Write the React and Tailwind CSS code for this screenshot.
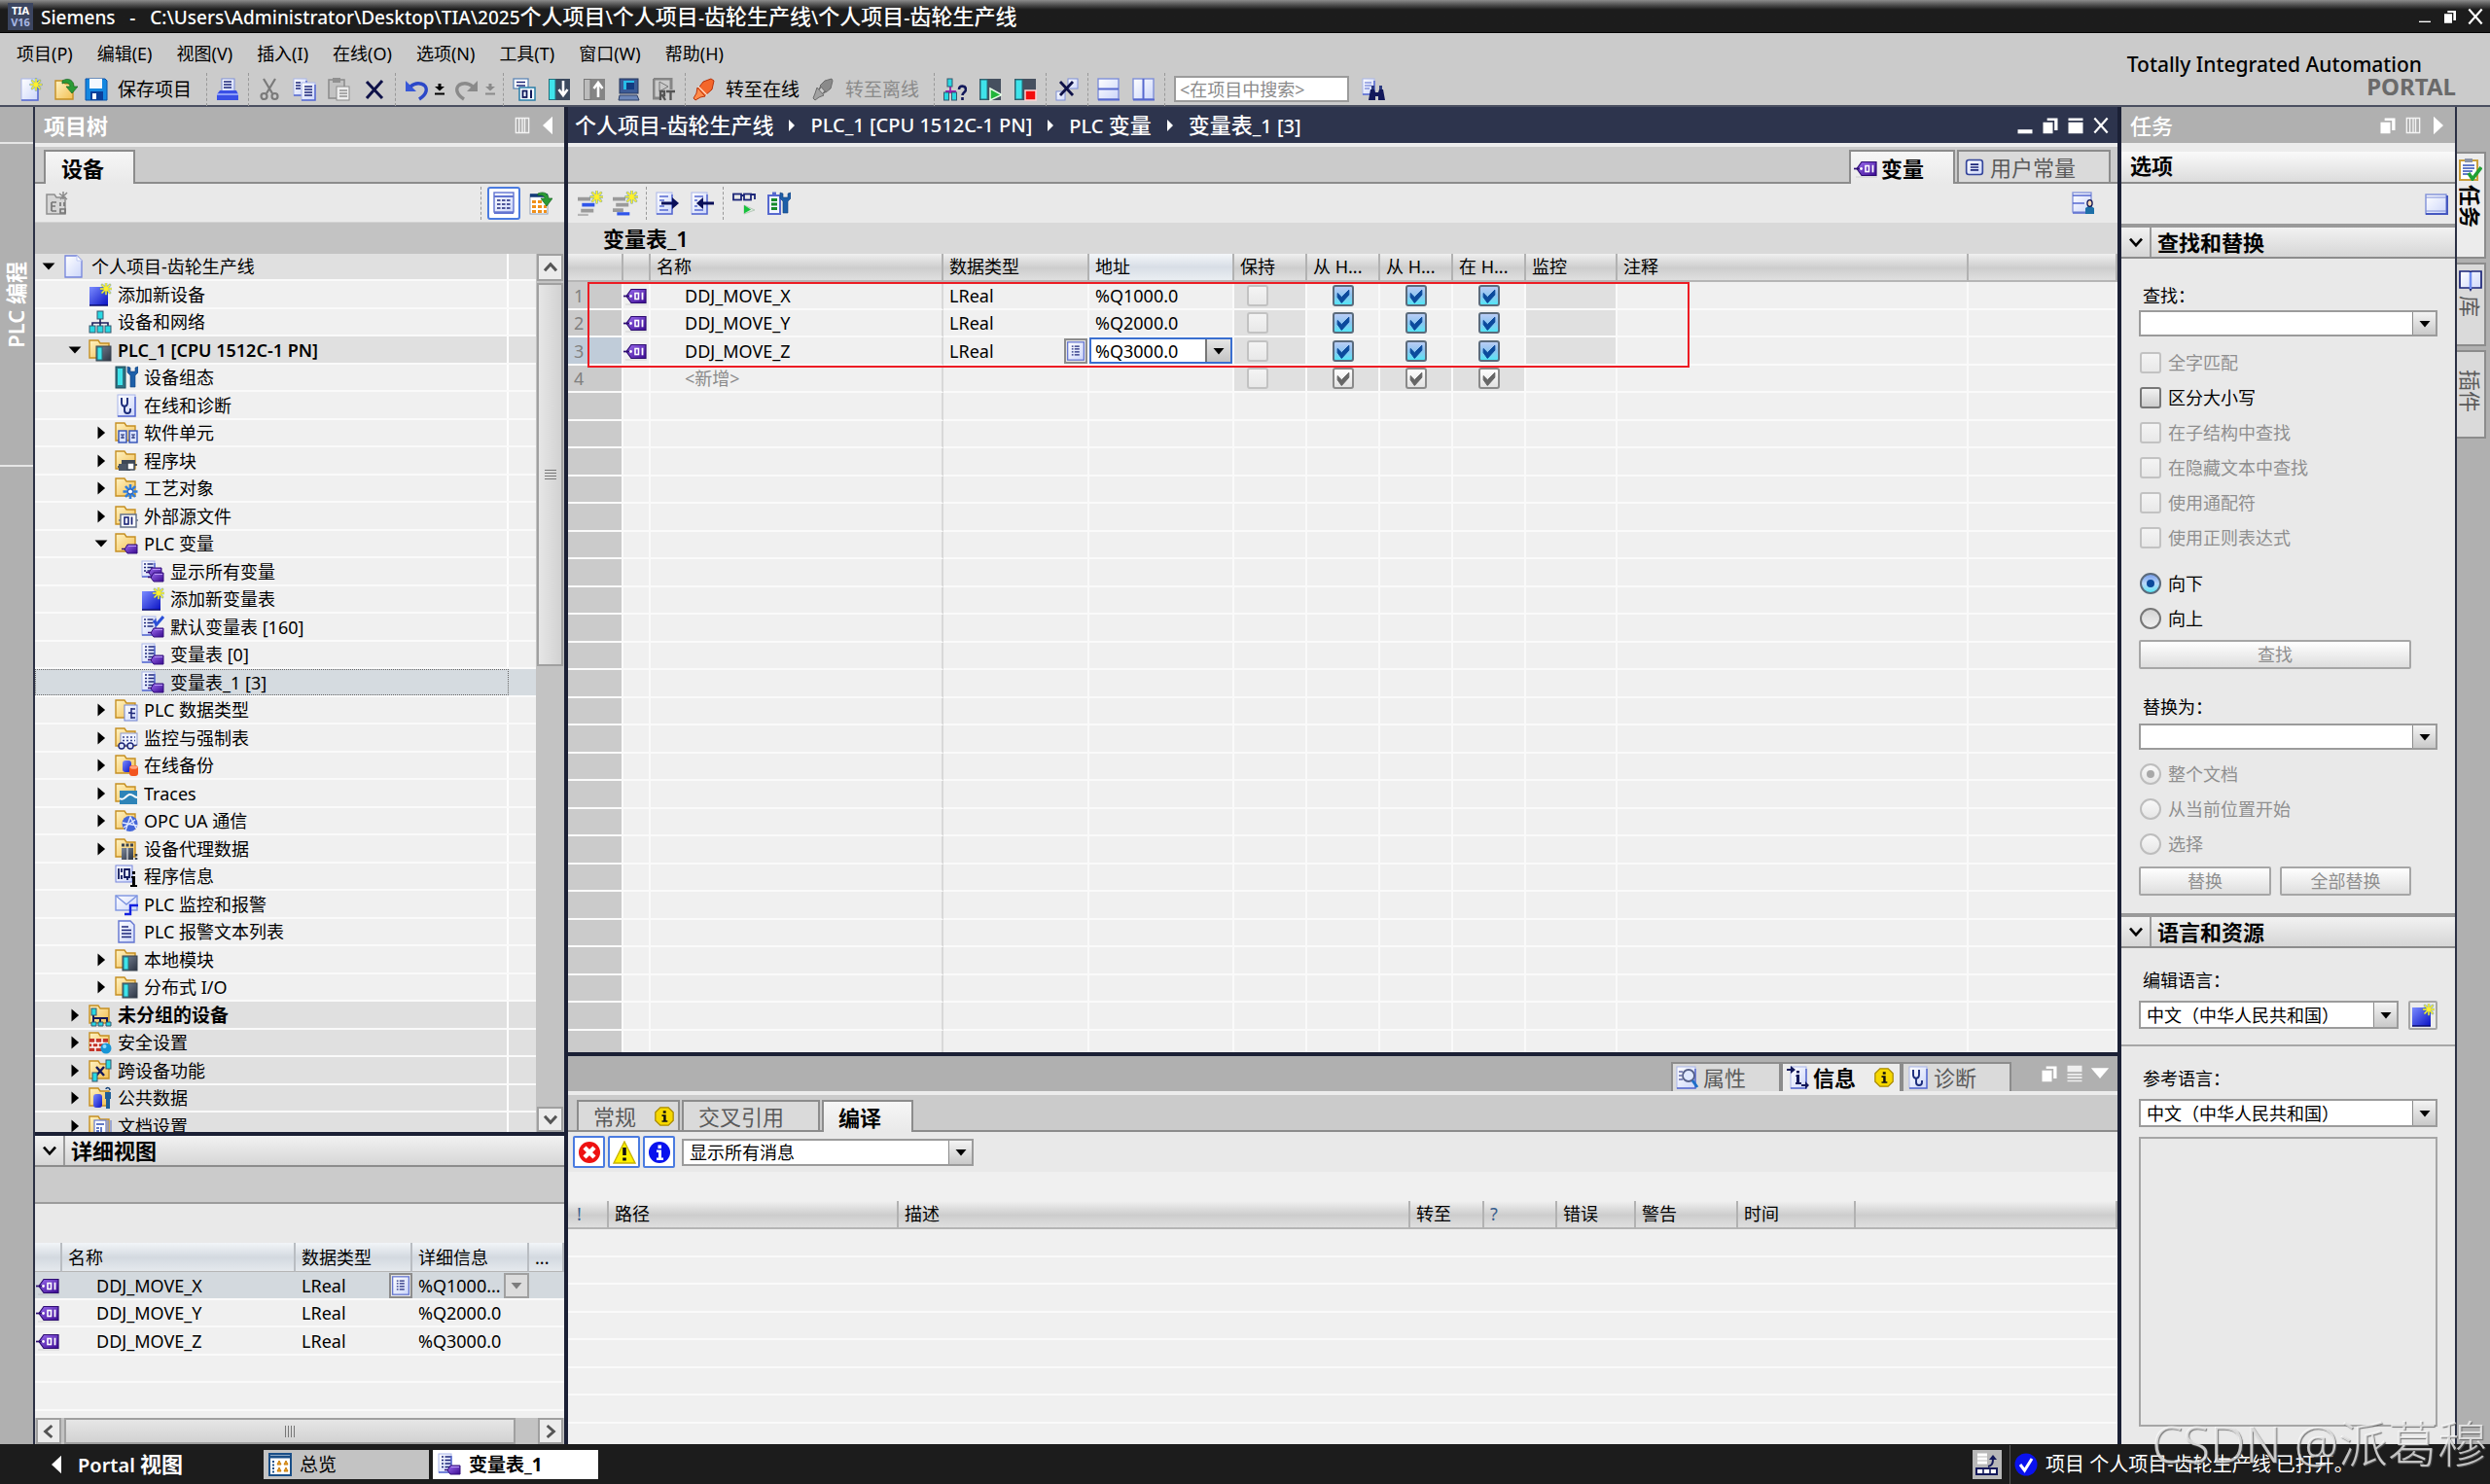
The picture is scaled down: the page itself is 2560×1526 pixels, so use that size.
import React from "react";

/* ---------- drawing primitives ---------- */
const Ic = ({ children, c = "w-6 h-6" }) => (
  <svg className={c + " shrink-0 block"} viewBox="0 0 24 24" fill="none" aria-hidden="true">
    {children}
  </svg>
);
const Defs = () => (
  <svg className="block h-0 w-0" aria-hidden="true">
    <defs>
      <linearGradient id="fold" x1="0" y1="0" x2="1" y2="1"><stop offset="0" stopColor="#fff3c4" /><stop offset="1" stopColor="#f2bf52" /></linearGradient>
      <linearGradient id="page" x1="0" y1="0" x2="1" y2="1"><stop offset="0" stopColor="#ffffff" /><stop offset="1" stopColor="#ccd6fa" /></linearGradient>
      <linearGradient id="blu" x1="0" y1="0" x2="1" y2="1"><stop offset="0" stopColor="#7b8cff" /><stop offset="1" stopColor="#0a12c4" /></linearGradient>
      <linearGradient id="pur" x1="0" y1="0" x2="1" y2="1"><stop offset="0" stopColor="#9c6cf0" /><stop offset="1" stopColor="#3a0a90" /></linearGradient>
      <linearGradient id="slate" x1="0" y1="0" x2="1" y2="1"><stop offset="0" stopColor="#7c8799" /><stop offset="1" stopColor="#2c3442" /></linearGradient>
    </defs>
  </svg>
);
/* Han characters are set in a larger size than the Latin text around them. */
const Mix = ({ children }) =>
  children.split(/([\u4e00-\u9fff]+)/).map((p, i) => (i % 2 ? <span key={i} className="text-[22px]">{p}</span> : p));
const Spark = ({ x, y }) => (
  <g transform={`translate(${x} ${y})`} strokeLinecap="round">
    <path d="M0-5.5V5.5M-5.5 0H5.5M-4-4L4 4M4-4L-4 4" stroke="#3a7f9a" strokeWidth="2.6" opacity=".6" />
    <path d="M0-5.5V5.5M-5.5 0H5.5M-4-4L4 4M4-4L-4 4" stroke="#fff12a" strokeWidth="1.5" />
  </g>
);
const Page = ({ x = 2, y = 1, w = 17, h = 22 }) => (
  <>
    <rect x={x} y={y} width={w} height={h} fill="url(#page)" stroke="#a9b6ea" />
    <path d={`M${x} ${y + h}h${w}V${y + 2}`} stroke="#5668cf" strokeWidth="1.5" />
  </>
);
const Folder = ({ children }) => (
  <Ic>
    <path d="M1 2h9l2 3h9v15H1z" fill="url(#fold)" stroke="#c58f22" strokeWidth="1.4" />
    {children}
  </Ic>
);
const Tag = ({ x = 9, y = 12 }) => (
  <g transform={`translate(${x} ${y})`}>
    <path d="M4 1h10v9H4L1 6z" fill="url(#pur)" stroke="#35107c" strokeWidth="1" />
    <path d="M-2 5.5h4" stroke="#35107c" strokeWidth="1.5" />
    <path d="M5 2.5h8" stroke="#b99af5" />
  </g>
);
const TagIcon = ({ c }) => (
  <Ic c={c}>
    <path d="M8 5.500h15v14H8L3 12.500z" fill="url(#pur)" stroke="#2d0c72" strokeWidth="1.2" />
    <path d="M0 12.500h8" stroke="#2d0c72" strokeWidth="1.7" />
    <circle cx="7.500" cy="12.500" r="1.4" fill="#fff" />
    <rect x="12" y="9.500" width="3.500" height="6" stroke="#fff" strokeWidth="1.6" />
    <path d="M19.500 8.700v7.600" stroke="#fff" strokeWidth="1.8" />
    <path d="M2 21h22" stroke="#000" opacity=".12" />
  </Ic>
);
const Module = ({ x = 8, y = 8 }) => (
  <>
    <rect x={x} y={y} width="15" height="15" fill="url(#slate)" stroke="#39424f" />
    <rect x={x + 1} y={y + 1} width="5" height="13" fill="#3fe3ea" stroke="#23707d" />
  </>
);
const Wrench = ({ x = 13, y = 1 }) => (
  <path transform={`translate(${x} ${y})`} d="M0 0v6l3 3v12h5V9l3-3V0L8 1v4H3V1z" fill="#1d5fa8" stroke="#123f78" strokeWidth=".6" />
);
const Nodes = () => (
  <>
    <path d="M12 8v5M4 17v-4h16v4M12 13v4" stroke="#1a1f5c" strokeWidth="1.6" />
    <rect x="9" y="1" width="6" height="8" fill="#27d8e2" stroke="#37566d" />
    <rect x="1" y="16" width="6" height="7" fill="#27d8e2" stroke="#37566d" />
    <rect x="9" y="16" width="6" height="7" fill="#27d8e2" stroke="#37566d" />
    <rect x="17" y="16" width="6" height="7" fill="#27d8e2" stroke="#37566d" />
  </>
);
const ListLines = ({ x = 5, y = 6, n = 4, c = "#1c2678" }) => (
  <g stroke={c} strokeWidth="1.5">
    {Array.from({ length: n }, (_, i) => (
      <path key={i} d={`M${x} ${y + i * 3.5}h2M${x + 3.5} ${y + i * 3.5}h6`} />
    ))}
  </g>
);
const Steth = () => (
  <path d="M7 4v5c0 5 6 5 6 0V4M10 13v4c0 4 6 4 6 0M16 15v2" stroke="#1a2b7a" strokeWidth="1.9" />
);

const icons = {
  page: <Ic><path d="M3 1h12l5 5v17H3z" fill="url(#page)" stroke="#7484dc" strokeWidth="1.3" /><path d="M15 1v5h5" fill="#fff" stroke="#c0cbf5" /></Ic>,
  addNew: <Ic><rect x="1" y="4" width="19" height="19" fill="url(#blu)" /><path d="M1 23h19" stroke="#080b70" strokeWidth="1.5" /><Spark x={18} y={6} /></Ic>,
  network: <Ic><Nodes /></Ic>,
  plc: <Folder><Module /></Folder>,
  config: <Ic><rect x="1" y="1" width="10" height="22" fill="#2d7383" stroke="#1f4d5c" /><rect x="3" y="3" width="5" height="17" fill="#3fe3ea" /><Wrench /></Ic>,
  diag: <Ic><Page x={3} w={18} /><Steth /></Ic>,
  units: <Folder><g stroke="#2f4fb5" strokeWidth="1.4" fill="#dbe4ff"><rect x="4" y="10" width="8" height="12" /><rect x="15" y="10" width="8" height="12" /></g><path d="M6 14h4M6 17h4M17 14h4M17 17h4M8 14v4M19 14v4" stroke="#1b2a70" /></Folder>,
  blocks: <Folder><path d="M3 18h5M18 16h5" stroke="#232b38" strokeWidth="1.5" /><rect x="7" y="11" width="14" height="5" fill="#3e4856" /><rect x="4" y="15" width="12" height="7" fill="#4b5666" /><rect x="13" y="14" width="7" height="7" fill="#fff" stroke="#3e4856" strokeWidth="1.5" /></Folder>,
  tech: <Folder><path d="M16 8v15M8.5 15.5h15M11 10l10 11M21 10L11 21" stroke="#2e7de0" strokeWidth="2.6" /><circle cx="16" cy="15.5" r="2.5" fill="#fff" stroke="#1b4fae" /></Folder>,
  ext: <Folder><rect x="6" y="10" width="16" height="13" fill="#fff" stroke="#64718a" strokeWidth="1.5" /><rect x="10" y="13" width="4" height="7" stroke="#1c2678" strokeWidth="1.6" /><path d="M17.5 12.5v8" stroke="#1c2678" strokeWidth="1.8" /><path d="M4 16h2M22 16h2" stroke="#64718a" strokeWidth="1.5" /></Folder>,
  vars: <Folder><Tag /></Folder>,
  allVars: <Ic><Page x={1} w={13} h={16} /><ListLines x={3} y={4} n={3} /><Tag x={7} y={7} /><Tag x={9} y={12} /></Ic>,
  defTable: <Ic><Page x={1} w={14} h={19} /><ListLines x={3} y={4} n={3} /><path d="M13 5l3 4 7-8" stroke="#2b50d8" strokeWidth="3" /><Tag /></Ic>,
  table: <Ic><Page x={1} w={13} h={19} /><ListLines x={4} y={4} n={4} /><Tag /></Ic>,
  types: <Folder><rect x="10" y="7" width="13" height="16" fill="url(#page)" stroke="#6f82cf" /><path d="M14 15h3M17 10v11M17 11h4M17 15.5h4M17 20h4" stroke="#1c2678" strokeWidth="1.5" /></Folder>,
  watch: <Folder><rect x="6" y="7" width="17" height="12" fill="#eef1ff" stroke="#8d99c9" /><path d="M8 11h13M8 14.5h13" stroke="#37458f" strokeWidth="1.5" strokeDasharray="2 2" /><circle cx="7" cy="20" r="3" fill="#dfe6ff" stroke="#1c2678" strokeWidth="1.4" /><circle cx="16" cy="20" r="3" fill="#dfe6ff" stroke="#1c2678" strokeWidth="1.4" /><path d="M10 20h3M19 20l4-1" stroke="#1c2678" /></Folder>,
  backup: <Folder><rect x="8" y="7" width="9" height="12" rx="3" fill="url(#blu)" /><rect x="15" y="12" width="9" height="11" rx="3" fill="#f2551f" /><ellipse cx="19.5" cy="14" rx="4" ry="1.8" fill="#ffa37c" /></Folder>,
  traces: <Folder><rect x="5" y="9" width="18" height="14" fill="#2e84b8" /><path d="M5 17c5 3 6-3 10-4s4 3 8 3" stroke="#fff" strokeWidth="2" /></Folder>,
  opc: <Folder><circle cx="15.5" cy="15" r="8" fill="#4466d8" /><path d="M8 14l15 3M11 22l5-14 6 12M9 19l12-8" stroke="#e4ebff" strokeWidth="1.3" /></Folder>,
  proxy: <Folder><path d="M7 8h12" stroke="#39424f" strokeWidth="3" strokeDasharray="3 1.5" /><rect x="7" y="11" width="12" height="12" fill="url(#slate)" /><path d="M13 11v12" stroke="#fff" /><path d="M22 17v6" stroke="#39424f" strokeWidth="2.6" strokeDasharray="2.5 1.5" /></Folder>,
  info: <Ic><rect x="1" y="1" width="17" height="17" fill="url(#page)" stroke="#7484dc" /><path d="M4 4v11M7 4v4M7 11v4M10 5h5v8h-5zM13 13v3" stroke="#111a5c" strokeWidth="1.8" /><path d="M17 12h4v9h2v2h-7v-2h2v-7h-1zM18 7h3v3h-3z" fill="#000" /></Ic>,
  alarm: <Ic><rect x="1" y="3" width="22" height="15" fill="url(#page)" stroke="#7c93e0" strokeWidth="1.4" /><path d="M1 3l11 9L23 3" stroke="#7c93e0" strokeWidth="1.4" /><path d="M10 22h6v-9h8" stroke="#1220e0" strokeWidth="2.4" /></Ic>,
  text: <Ic><path d="M4 1h12l4 4v18H4z" fill="url(#page)" stroke="#6274d0" strokeWidth="1.4" /><path d="M7 7h7M7 10.5h10M7 14h10M7 17.5h10" stroke="#1c2678" strokeWidth="1.5" /></Ic>,
  ungrouped: <Folder><path d="M5 8v7h14v4M5 15v5M12 15v5" stroke="#12185a" strokeWidth="2" /><rect x="3" y="5" width="5" height="7" fill="#27d8e2" stroke="#37566d" /><path d="M3 19h5v4H3zM10 19h5v4h-5zM18 19h5v4h-5z" fill="#27d8e2" stroke="#37566d" /></Folder>,
  security: <Folder><rect x="1" y="8" width="19" height="13" fill="#c4342a" /><path d="M1 12.5h19M1 17h19M7 8v4M14 8v4M4 13v4M10 13v4M7 17v4" stroke="#fff" strokeWidth="1.5" /><circle cx="18" cy="18" r="5.5" fill="#1795d6" /><circle cx="16.5" cy="16" r="2" fill="#8fdcff" /></Folder>,
  cross: <Folder><path d="M8 8l8 9M16 8l-8 9" stroke="#12185a" strokeWidth="2.4" /><rect x="18" y="1" width="5" height="9" fill="#27d8e2" stroke="#37566d" /><rect x="4" y="14" width="5" height="9" fill="#27d8e2" stroke="#37566d" /></Folder>,
  common: <Folder><rect x="5" y="8" width="9" height="14" rx="3" fill="url(#blu)" /><path d="M17 6h6v7h-1v10h-4V13h-1z" fill="#1d5f98" /><path d="M18 3c0-2 4-2 4 1" stroke="#123f78" strokeWidth="1.5" /></Folder>,
  docset: <Folder><rect x="6" y="6" width="12" height="17" fill="#fff" stroke="#6f82cf" strokeWidth="1.3" /><path d="M8 10h8M8 14h3M8 17h3M13 13v8" stroke="#2f4fb5" strokeWidth="1.5" /><path d="M20 6v17M23 6v17" stroke="#8593c9" strokeWidth="1.5" /></Folder>,
  /* toolbar */
  tNew: <Ic><Page x={2} /><Spark x={17} y={7} /></Ic>,
  tOpen: <Ic><path d="M1 3h8l2 3h8v16H1z" fill="url(#fold)" stroke="#c58f22" strokeWidth="1.4" /><path d="M8 3c7-4 12 0 12 6h4l-6 7-6-7h4c0-3-3-5-8-3z" fill="#2a9b35" stroke="#176322" strokeWidth=".7" /></Ic>,
  tSave: <Ic><path d="M1 1h20l2 2v20H1z" fill="#1487e0" stroke="#0a50a8" /><rect x="5" y="1" width="13" height="10" fill="#f4f8ff" /><rect x="6" y="14" width="13" height="9" fill="#0a3f9a" /><rect x="8" y="16" width="4" height="6" fill="#fff" /></Ic>,
  tPrint: <Ic><rect x="6" y="1" width="13" height="13" fill="url(#page)" stroke="#7f8fd8" /><path d="M8 4h8M8 7h8M8 10h8" stroke="#1c2678" strokeWidth="1.4" /><path d="M4 13h17l2 4v6H1v-6z" fill="#3a50e6" /><path d="M1 17h22" stroke="#a9b7ff" strokeWidth="1.5" /></Ic>,
  tCut: <Ic><path d="M6 1l9 15M18 1L9 16" stroke="#7a7a7a" strokeWidth="2.2" /><circle cx="6.5" cy="19" r="3" stroke="#7a7a7a" strokeWidth="2.2" /><circle cx="17.5" cy="19" r="3" stroke="#7a7a7a" strokeWidth="2.2" /></Ic>,
  tCopy: <Ic><Page x={1} y={1} w={13} h={17} /><path d="M3 5h5M3 8h5M3 11h5" stroke="#1c2678" strokeWidth="1.4" /><Page x={9} y={5} w={14} h={18} /><path d="M12 9h8M12 12h8M12 15h8M12 18h8" stroke="#1c2678" strokeWidth="1.5" /></Ic>,
  tPaste: <Ic><rect x="1" y="2" width="16" height="19" fill="#c2c2c2" stroke="#8b8b8b" strokeWidth="1.5" /><rect x="5" y="0" width="8" height="5" fill="#909090" /><rect x="9" y="9" width="13" height="14" fill="#eee" stroke="#8b8b8b" /><path d="M12 13h8M12 16h8M12 19h8" stroke="#909090" strokeWidth="1.4" /></Ic>,
  tDel: <Ic><path d="M4 4l16 17M20 3L4 21" stroke="#0e1148" strokeWidth="3" /></Ic>,
  tUndo: <Ic><path d="M1 3v11h11z" fill="#3858d8" /><path d="M6 9c7-6 18-3 16 5-1 4-4 6-7 8" stroke="#2c48c8" strokeWidth="3.4" /></Ic>,
  tRedo: <Ic><path d="M23 3v11H12z" fill="#8a8a8a" /><path d="M18 9C11 3 0 6 2 14c1 4 4 6 7 8" stroke="#8a8a8a" strokeWidth="3.4" /></Ic>,
  tCompile: <Ic><rect x="1" y="1" width="15" height="10" fill="#fff" stroke="#5d86b5" strokeWidth="1.3" /><path d="M4 4.5h9M4 8h9" stroke="#1c2678" strokeWidth="1.5" /><rect x="7" y="10" width="16" height="13" fill="#f4faff" stroke="#2a7ea8" strokeWidth="1.5" /><rect x="10.5" y="13.5" width="4" height="6.5" stroke="#111a5c" strokeWidth="1.8" /><path d="M19 12.5v8.5" stroke="#111a5c" strokeWidth="2" /></Ic>,
  tDown: <Ic><rect x="1" y="1" width="22" height="22" fill="#3c4a5e" /><rect x="1.500" y="1.500" width="6.500" height="21" fill="#3fe3ea" stroke="#23707d" /><path d="M16 3v13M11.5 12l4.5 6 4.5-6" stroke="#fff" strokeWidth="2.6" /></Ic>,
  tUp: <Ic><rect x="1" y="1" width="22" height="22" fill="#858585" /><rect x="1.500" y="1.500" width="6.500" height="21" fill="#bcbcbc" stroke="#777" /><path d="M16 20V7M11.5 11L16 5l4.5 6" stroke="#fff" strokeWidth="2.6" /></Ic>,
  tPc: <Ic><rect x="2" y="1" width="19" height="15" fill="#3b5b96" stroke="#24365c" /><rect x="6" y="3" width="11" height="9" fill="#27bde8" /><rect x="9" y="5" width="8" height="7" fill="#123a80" /><path d="M2 18h18l2 5H1z" fill="#6b86b8" stroke="#2c3f66" /></Ic>,
  tRt: <Ic><path d="M1 1h18v11M1 1v20h6" stroke="#858585" strokeWidth="3" /><path d="M7 4l9 5-9 5z" fill="#c8c8c8" stroke="#777" /><path d="M8 23v-9h4v4H8M10 18l3 5M14 14h9M18.500 14v9" stroke="#555" strokeWidth="2.3" /></Ic>,
  tOn: <Ic><g stroke="#b93208" strokeWidth="1"><path d="M11 4l8-3 3 2-2 9-8 7-7-7z" fill="#f4672b" /><path d="M5 10l8 9-5 1-5 3-2-2 3-5z" fill="#ff8b4a" /></g><path d="M6 9l9 9" stroke="#ffe0cc" strokeWidth="1.3" /></Ic>,
  tOff: <Ic><path d="M14 3l7-2 1 2-2 8-5 4-6-7z" fill="#8a8a8a" stroke="#6c6c6c" /><path d="M6 10l7 8-5 2-4 3-2-2 2-5z" fill="#a2a2a2" stroke="#6c6c6c" /><path d="M10 9l-2 3M15 14l-3 2" stroke="#6c6c6c" strokeWidth="1.6" /></Ic>,
  tAccess: <Ic><path d="M7 8v8M3 17v-3h9v3" stroke="#9a1fb0" strokeWidth="1.8" /><rect x="4" y="1" width="5" height="8" fill="#27d8e2" stroke="#37566d" /><rect x="0.5" y="15" width="5" height="8" fill="#27d8e2" stroke="#37566d" /><rect x="8.5" y="15" width="5" height="8" fill="#27d8e2" stroke="#37566d" /><path d="M16 12c0-5 7-4 7 0 0 3-3.5 3-3.5 6M19.5 20v3" stroke="#12185a" strokeWidth="2.6" /></Ic>,
  tStart: <Ic><rect x="1" y="1" width="22" height="22" fill="#46505f" /><rect x="2" y="2" width="7" height="20" fill="#3fe3ea" stroke="#23707d" /><path d="M12 11l12 6.500-12 5.500z" fill="#22b53a" stroke="#e8ffe8" strokeWidth="1.5" /></Ic>,
  tStop: <Ic><rect x="1" y="1" width="22" height="22" fill="#46505f" /><rect x="2" y="2" width="7" height="20" fill="#3fe3ea" stroke="#23707d" /><rect x="12" y="13" width="11" height="10" fill="#f30d0d" stroke="#ffd6d6" strokeWidth="1.5" /></Ic>,
  tXref: <Ic><rect x="13" y="1" width="10" height="10" fill="url(#page)" stroke="#7f8fd8" /><rect x="1" y="14" width="9" height="9" fill="url(#page)" stroke="#7f8fd8" /><path d="M5 4l13 14M18 4L5 18" stroke="#0e1148" strokeWidth="2.8" /></Ic>,
  tSplitH: <Ic><rect x="1" y="1" width="21" height="21" fill="url(#page)" stroke="#7f8fd8" strokeWidth="1.4" /><path d="M1 11.5h21M1 22.5h22" stroke="#5668cf" strokeWidth="2" /></Ic>,
  tSplitV: <Ic><rect x="1" y="1" width="21" height="21" fill="url(#page)" stroke="#7f8fd8" strokeWidth="1.4" /><path d="M11.5 1v21M1 22.5h22" stroke="#5668cf" strokeWidth="2" /></Ic>,
  tFind: <Ic><Page x={1} w={12} h={16} /><path d="M3 5h7M3 8h7M3 11h5" stroke="#5668cf" /><path d="M9 12h4l1 3h3l1-3h4l2 11h-7v-4h-3v4H7z" fill="#12185a" /><path d="M10 8h3v4h-3zM18 8h3v4h-3z" fill="#2c3a80" /></Ic>,
  pTree: <Ic><path d="M1 3h8l2 3h9v17H1z" fill="#d6d6d6" stroke="#8f8f8f" strokeWidth="1.5" /><path d="M6 11v9M6 11h5M6 15h4M6 20h5M15 11v4M19 11v4M15 18h5v4h-5z" stroke="#777" strokeWidth="1.7" /><path d="M18 0v8M14 2l8 6M22 1l-7 7" stroke="#8a8a8a" strokeWidth="1.5" /></Ic>,
  pGrid: <Ic><rect x="2" y="1" width="20" height="20" fill="url(#page)" stroke="#6274d0" strokeWidth="1.4" /><path d="M2 5h20M2 22h20" stroke="#6274d0" strokeWidth="1.8" /><path d="M5 9h14M5 13h14M5 17h14" stroke="#1c2678" strokeWidth="1.7" strokeDasharray="3.5 1.5" /></Ic>,
  pSync: <Ic><rect x="1" y="3" width="18" height="20" fill="#fff" stroke="#8fa0b8" /><path d="M1 4h18" stroke="#123a78" strokeWidth="3.500" /><path d="M3 9h4v3H3zM9 9h4v3H9zM3 14h4v3H3zM9 14h4v3H9zM15 14h3v3h-3zM3 19h4v3H3zM9 19h4v3H9zM15 19h3v3h-3z" fill="#f0901a" /><path d="M9 2c7-3 11 1 11 5h4l-6 8-6-8h4c0-2-2-4-7-3z" fill="#2a9b35" stroke="#176322" strokeWidth=".7" /></Ic>,
  eIns: <Ic c="w-[26px] h-[26px]"><path d="M0 8h12M3 19h12" stroke="#9a9a9a" strokeWidth="3.4" /><path d="M4 13.5h12" stroke="#2f55ea" strokeWidth="3.4" /><path d="M0 23h10" stroke="#b5b5b5" strokeWidth="2" /><Spark x={18} y={6} /></Ic>,
  eAdd: <Ic c="w-[26px] h-[26px]"><path d="M0 8h12M3 13.5h12M0 18.5h10" stroke="#9a9a9a" strokeWidth="3.4" /><path d="M4 22h12" stroke="#2f55ea" strokeWidth="3" /><Spark x={18} y={6} /></Ic>,
  eExp: <Ic><Page x={1} w={16} /><path d="M4 5h9M4 9h5M4 15h5M4 19h9" stroke="#5668cf" strokeWidth="1.3" /><path d="M6 12h13" stroke="#0a0f58" strokeWidth="3" /><path d="M17 6l7 6-7 6z" fill="#0a0f58" /></Ic>,
  eImp: <Ic><Page x={1} w={16} /><path d="M4 5h9M4 9h3M4 15h3M4 19h9" stroke="#5668cf" strokeWidth="1.3" /><path d="M11 12h13" stroke="#0a0f58" strokeWidth="3" /><path d="M13 6l-7 6 7 6z" fill="#0a0f58" /></Ic>,
  eMon: <Ic><rect x="1" y="2.500" width="8" height="6" stroke="#1c2678" strokeWidth="1.8" /><rect x="12" y="2.500" width="7" height="6" stroke="#1c2678" strokeWidth="1.8" /><path d="M9 4h3M19 3h4v5" stroke="#1c2678" strokeWidth="1.8" /><path d="M12 14l11 5-11 4z" fill="#dfe8df" stroke="#b6c9b9" /><path d="M12 14l7 4.500-7 4z" fill="#17c23c" /></Ic>,
  eBat: <Ic><rect x="1" y="4" width="12" height="19" fill="#f0f4ff" stroke="#5668cf" strokeWidth="2" /><path d="M5 2h4" stroke="#5668cf" strokeWidth="3" /><path d="M4 8.5h6M4 13h6M4 17.5h6" stroke="#168a2a" strokeWidth="3" /><Wrench /></Ic>,
  eUser: <Ic><rect x="1" y="1" width="19" height="20" fill="url(#page)" stroke="#7f8fd8" strokeWidth="1.3" /><path d="M1 4h19M1 12h12M1 22h20" stroke="#5668cf" strokeWidth="1.6" /><path d="M14 23v-6l3-2h3l3 2v6z" fill="#1d6fa8" /><ellipse cx="18.5" cy="12" rx="2.6" ry="3.4" fill="#ffd9b0" stroke="#12185a" strokeWidth="1.3" /></Ic>,
  konst: <Ic c="w-[20px] h-6"><rect x="2" y="3" width="20" height="18" rx="3" fill="url(#page)" stroke="#33449a" strokeWidth="2" /><path d="M7 8.5h10M7 12h10M7 15.5h10" stroke="#1c2678" strokeWidth="2" /></Ic>,
  win: <Ic><rect x="1" y="2" width="21" height="20" fill="url(#page)" stroke="#7f8fd8" strokeWidth="1.4" /><path d="M1 5h21M1 19h21" stroke="#7f8fd8" /><path d="M1 22h22V3" stroke="#4658c0" strokeWidth="2" /></Ic>,
  props: <Ic><Page x={1} w={19} /><circle cx="13" cy="10" r="6" fill="#dfe8ff" stroke="#555f88" strokeWidth="1.8" /><path d="M17 15l5 7" stroke="#1d6fc8" strokeWidth="3" /><path d="M3 6h4M3 10h3M3 14h4" stroke="#1c2678" /></Ic>,
  infoTab: <Ic><Page x={5} w={16} /><path d="M11 9h3v8h2v2h-6v-2h1v-6h-1zM11 5h3v2.5h-3z" fill="#12185a" /><path d="M1 4h6M16 20h7" stroke="#12185a" strokeWidth="2" /><path d="M5 0l5 4-5 4zM20 16l4 4-4 4z" fill="#12185a" /></Ic>,
  badge: <Ic c="w-[20px] h-[20px]"><path d="M7 1h10l6 6v10l-6 6H7l-6-6V7z" fill="#f6d800" stroke="#a88900" strokeWidth="1.5" /><path d="M9 10h5v7h2v2H9v-2h2v-5H9zM10.5 5h3.5v3h-3.5z" fill="#111" /></Ic>,
  err: <Ic><circle cx="12" cy="12" r="11" fill="#ee1111" /><path d="M7 7l10 10M17 7L7 17" stroke="#fff" strokeWidth="4.4" /></Ic>,
  warn: <Ic><path d="M12 1l11 22H1z" fill="#fff200" stroke="#c9b400" strokeWidth="1.4" /><path d="M12 7v8M12 17.5v3" stroke="#111" strokeWidth="3.6" /></Ic>,
  inf: <Ic><circle cx="12" cy="12" r="11" fill="#0a12ee" /><path d="M9 9.5h5v8h2V20H9v-2.5h2V12H9zM10.5 4.5h3.5v3.5h-3.5z" fill="#fff" /></Ic>,
  ok: <Ic><circle cx="12" cy="12" r="11.5" fill="#0a12ee" /><path d="M6 12l4.5 6L18 6" stroke="#fff" strokeWidth="3" /></Ic>,
  list: <Ic c="w-[20px] h-[22px]"><rect x="2" y="1" width="20" height="22" fill="url(#page)" stroke="#6274d0" strokeWidth="1.5" /><ListLines x={7} y={6} n={4} /></Ic>,
  overview: <Ic><rect x="1" y="1" width="22" height="22" fill="#fff" stroke="#1a4f88" strokeWidth="2" /><path d="M1 4h22" stroke="#1a4f88" strokeWidth="3" /><path d="M5 8v13" stroke="#1a4f88" strokeWidth="2" strokeDasharray="2 1.5" /><path d="M9 12l2-4 2 4zM16 12l2-4 2 4zM9 19l2-4 2 4zM16 19l2-4 2 4z" fill="#f0a020" stroke="#c37b0c" /></Ic>,
  task: <Ic><rect x="1" y="3" width="18" height="20" fill="#fff" stroke="#caa03c" strokeWidth="2" /><rect x="6" y="1" width="8" height="4" fill="#8a93a8" /><path d="M4 8h12M4 11h12M4 14h10M4 17h7" stroke="#2f4fb5" strokeWidth="1.5" /><path d="M10 16l4 6 9-12" stroke="#1fa035" strokeWidth="3.6" /></Ic>,
  book: <Ic><path d="M1 3h10l1 1 1-1h10v17H13l-1 2-1-2H1z" fill="url(#page)" stroke="#1a2478" strokeWidth="1.7" /><path d="M12 4v17" stroke="#6f8cf0" strokeWidth="2.5" /></Ic>,
  status: <Ic><path d="M2 2h10M2 6h10M2 10h10" stroke="#fff" strokeWidth="2.8" /><rect x="1" y="16" width="21" height="6" fill="#fff" stroke="#12185a" strokeWidth="2" /><path d="M8 16v6M15 16v6" stroke="#12185a" strokeWidth="1.6" /><path d="M14 7l4-5 4 5z" fill="#12185a" /><path d="M18 6c0 5-1 7-5 8" stroke="#12185a" strokeWidth="2" /></Ic>,
};

/* white window glyphs */
const glyph = {
  min: <path d="M3 17h18v5H3z" fill="#fff" />,
  minThin: <path d="M3 19h18v2H3z" fill="#fff" />,
  restore: <path d="M3 8h12v14H3zM8 3h13v15h-4V6H8z" fill="#fff" />,
  max: <path d="M3 3h18v3H3zM3 8h18v14H3z" fill="#fff" />,
  close: <path d="M4 3l16 18M20 3L4 21" stroke="#fff" strokeWidth="2.6" />,
  pin: <path d="M4 3h16v18H4zM8 3v18M12 3v18M15 3v18" stroke="#fff" strokeWidth="1.6" opacity=".85" />,
  left: <path d="M18 1v22L6 12z" fill="#fff" />,
  right: <path d="M6 1v22l12-11z" fill="#fff" />,
  down: <path d="M1 5h22L12 18z" fill="#fff" />,
  rows: <path d="M3 2h18v8H3zM3 12h18v2H3zM3 16h18v2H3zM3 20h18v2H3z" fill="#fff" opacity=".8" />,
};
const WinBtn = ({ g, label, c = "w-5 h-5" }) => (
  <button type="button" aria-label={label} className="flex h-6 w-[26px] items-center justify-center">
    <Ic c={c}>{glyph[g]}</Ic>
  </button>
);

/* ---------- shared controls ---------- */
const T = ({ i, label }) => (
  <button type="button" aria-label={label} className="flex h-8 w-9 shrink-0 items-center justify-center">{icons[i]}</button>
);
const Sep = () => <span className="mx-[3px] h-[34px] w-px shrink-0 border-l border-dashed border-[#999]" />;
const Arrow = ({ gray }) => (
  <Ic c="w-3 h-3"><path d="M1 6h22L12 19z" fill={gray ? "#7d7d7d" : "#000"} /></Ic>
);
const arrowCell = "pointer-events-none flex w-[24px] shrink-0 items-center justify-center border-l border-[#8c8c8c] bg-linear-to-b from-[#f4f4f4] to-[#c9c9c9]";
const Combo = ({ label, options, className, id }) => (
  <div className={"relative flex border-2 border-[#9b9b9b] bg-white " + className}>
    <select id={id} aria-label={label} className="min-w-0 flex-1 appearance-none bg-transparent pl-1.5 text-[18px] leading-6 outline-none">
      {options.map((o) => <option key={o}>{o}</option>)}
    </select>
    <span className={arrowCell}><Arrow /></span>
  </div>
);
const Check = ({ checked, disabled, tone, label, id }) => {
  const look = checked
    ? disabled ? "border-[#8a8a8a] bg-linear-to-b from-white to-[#e2e2e2]" : "border-[#5b6b7c] bg-linear-to-b from-[#b9cdf5] via-[#8cc4f0] to-[#4fe6f6]"
    : disabled ? "border-[#c2c2c2] bg-linear-to-b from-[#f4f4f4] to-[#e8e8e8]" : "border-[#777] bg-linear-to-b from-[#f2f2f2] to-[#cdcdcd]";
  return (
    <span className="inline-grid h-[22px] w-[22px] shrink-0 place-items-center align-middle">
      <input id={id} type="checkbox" aria-label={label} defaultChecked={checked} disabled={disabled} className={"col-start-1 row-start-1 h-[22px] w-[22px] appearance-none rounded-[3px] border-2 " + look} />
      {checked && (
        <svg viewBox="0 0 24 24" className="pointer-events-none col-start-1 row-start-1 h-[20px] w-[20px]" fill="none">
          <path d="M5 9l5 5 9-9v6l-9 10-5-7z" fill={tone || "#0b4a9c"} stroke={tone || "#0b4a9c"} strokeWidth="1.2" />
        </svg>
      )}
    </span>
  );
};
const CheckRow = ({ id, text, disabled }) => (
  <div className="flex h-9 items-center gap-[7px]">
    <Check id={id} disabled={disabled} />
    <label htmlFor={id} className={disabled ? "text-[#8f8f8f]" : ""}>{text}</label>
  </div>
);
const RadioRow = ({ id, name, text, disabled, checked }) => (
  <div className="flex h-9 items-center gap-[7px]">
    <span className="grid h-[22px] w-[22px] shrink-0 place-items-center">
      <input id={id} name={name} type="radio" defaultChecked={checked} disabled={disabled}
        className={"col-start-1 row-start-1 h-[22px] w-[22px] appearance-none rounded-full border-2 " +
          (disabled ? "border-[#bdbdbd] bg-linear-to-b from-[#f8f8f8] to-[#e6e6e6]" : checked ? "border-[#5b6b7c] bg-linear-to-b from-[#7aa0ec] via-[#b9d8f8] to-[#4fe6f6]" : "border-[#777] bg-linear-to-b from-[#d4d4d4] to-[#efefef]")} />
      {checked && <span className={"pointer-events-none col-start-1 row-start-1 h-2 w-2 rounded-full " + (disabled ? "bg-[#a8a8a8]" : "bg-[#0b4a9c]")} />}
    </span>
    <label htmlFor={id} className={disabled ? "text-[#8f8f8f]" : ""}>{text}</label>
  </div>
);
const GrayBtn = ({ children, className }) => (
  <button type="button" disabled className={"h-[30px] rounded-[2px] border-2 border-[#a6a6a6] bg-linear-to-b from-white to-[#dedede] leading-6 text-[#8f8f8f] " + className}>{children}</button>
);
const SectionHead = ({ children }) => (
  <div className="flex h-8 shrink-0 items-center border-b-2 border-[#8c8c8c] bg-linear-to-b from-[#f2f2f2] to-[#d6d6d6]">
    <button type="button" aria-label="折叠" className="flex h-full w-[31px] items-center justify-center border-r-2 border-[#9b9b9b]">
      <Ic c="w-4 h-4"><path d="M3 7l9 10 9-10" stroke="#000" strokeWidth="4" /></Ic>
    </button>
    <h2 className="pl-[6px] text-[22px] leading-7 font-bold">{children}</h2>
  </div>
);
const tabBase = "flex h-[33px] items-center border-2 border-b-0 border-[#8c8c8c] text-[22px] leading-7 ";
const tabOn = "-mb-[2px] h-[35px] bg-linear-to-b from-[#f6f6f6] to-[#e9e9e9] font-bold ";
const tabOff = "bg-[#dadada] text-[#5a5a5a] ";

/* ---------- project tree ---------- */
const tree = [
  [0, "d", "page", "个人项目-齿轮生产线", "g"],
  [1, "", "addNew", "添加新设备"],
  [1, "", "network", "设备和网络"],
  [1, "d", "plc", "PLC_1 [CPU 1512C-1 PN]", "gs"],
  [2, "", "config", "设备组态"],
  [2, "", "diag", "在线和诊断"],
  [2, "r", "units", "软件单元"],
  [2, "r", "blocks", "程序块"],
  [2, "r", "tech", "工艺对象"],
  [2, "r", "ext", "外部源文件"],
  [2, "d", "vars", "PLC 变量"],
  [3, "", "allVars", "显示所有变量"],
  [3, "", "addNew", "添加新变量表"],
  [3, "", "defTable", "默认变量表 [160]"],
  [3, "", "table", "变量表 [0]"],
  [3, "", "table", "变量表_1 [3]", "sel"],
  [2, "r", "types", "PLC 数据类型"],
  [2, "r", "watch", "监控与强制表"],
  [2, "r", "backup", "在线备份"],
  [2, "r", "traces", "Traces"],
  [2, "r", "opc", "OPC UA 通信"],
  [2, "r", "proxy", "设备代理数据"],
  [2, "", "info", "程序信息"],
  [2, "", "alarm", "PLC 监控和报警"],
  [2, "", "text", "PLC 报警文本列表"],
  [2, "r", "plc", "本地模块"],
  [2, "r", "plc", "分布式 I/O"],
  [1, "r", "ungrouped", "未分组的设备", "gb"],
  [1, "r", "security", "安全设置", "g"],
  [1, "r", "cross", "跨设备功能", "g"],
  [1, "r", "common", "公共数据", "g"],
  [1, "r", "docset", "文档设置", "g"],
];
const pads = ["pl-[4px]", "pl-[31px]", "pl-[58px]", "pl-[85px]"];
const TreeRow = ({ row }) => {
  const [lvl, arrow, icon, text, flag = ""] = row;
  const sel = flag === "sel";
  const bg = sel ? "bg-[#d5dbe0]" : flag.startsWith("g") ? "bg-[#e0e0e0]" : "bg-[#f0f0f0]";
  return (
    <li className={"flex border-b-2 border-[#fafafa] odd:h-[28px] even:h-[29px] " + bg}>
      <div className={"flex min-w-0 flex-1 items-center " + pads[lvl] + (sel ? " outline-1 -outline-offset-1 outline-dotted outline-[#666]" : " border-r-2 border-r-white")}>
        <span className="flex w-[20px] shrink-0 justify-center">
          {arrow && (
            <button type="button" aria-label={text}>
              <Ic c="w-[14px] h-[14px]"><path d={arrow === "d" ? "M1 6h22L12 18z" : "M6 1l13 11L6 23z"} fill="#000" /></Ic>
            </button>
          )}
        </span>
        <span className="ml-[4px] mr-[6px]">{icons[icon]}</span>
        <span className={"truncate leading-6 " + (flag === "gs" ? "font-semibold" : flag === "gb" ? "font-bold text-[19px]" : "")}>{text}</span>
      </div>
      <div className="w-7 shrink-0" />
    </li>
  );
};
const sbBtn = "flex shrink-0 items-center justify-center border-2 border-[#a0a0a0] bg-[#ececec] ";
const Chev = ({ d }) => <Ic c="w-4 h-4"><path d={d} stroke="#555" strokeWidth="4.5" /></Ic>;

const LeftPanel = () => (
  <aside className="flex w-[544px] shrink-0 flex-col">
    <div className="flex h-[37px] shrink-0 items-center bg-[#b0b0b0] pr-1 pl-[9px] text-[22px] font-bold text-white">
      <h2 className="flex-1 leading-7">项目树</h2>
      <WinBtn g="pin" label="自动折叠" /><WinBtn g="left" label="折叠" />
    </div>
    <div className="h-1 shrink-0 bg-[#ececec]" />
    <div className="flex h-[38px] shrink-0 items-end border-b-2 border-[#8c8c8c] bg-[#cbcbcb] pl-[9px]">
      <button type="button" className={tabBase + tabOn + "w-[94px] pl-4"}>设备</button>
    </div>
    <div className="flex h-10 shrink-0 items-center border-b border-[#d4d4d4] bg-[#e9e9e9] pr-[6px] pl-[5px]">
      <T i="pTree" label="新建组" />
      <span className="flex-1" />
      <Sep />
      <button type="button" aria-label="详细信息" className="mx-[3px] flex h-[34px] w-[34px] items-center justify-center rounded-[3px] border-2 border-[#4a7be0] bg-white">{icons.pGrid}</button>
      <T i="pSync" label="同步" />
    </div>
    <div className="h-8 shrink-0 bg-[#c3c3c3]" />
    <div className="flex min-h-0 flex-1">
      <ul className="min-w-0 flex-1 overflow-hidden">{tree.map((r, i) => <TreeRow key={i} row={r} />)}</ul>
      <div className="flex w-[29px] shrink-0 flex-col items-center bg-[#c3c3c3]">
        <button type="button" aria-label="向上滚动" className={sbBtn + "h-[28px] w-[27px]"}><Chev d="M3 17l9-10 9 10" /></button>
        <div className="mt-[2px] flex h-[394px] w-[27px] flex-col items-center justify-center gap-[2px] border-2 border-[#a0a0a0] bg-linear-to-r from-[#e6e6e6] to-[#d2d2d2]">
          {[0, 1, 2, 3].map((k) => <span key={k} className="h-px w-3 bg-[#777]" />)}
        </div>
        <span className="flex-1" />
        <button type="button" aria-label="向下滚动" className={sbBtn + "h-[26px] w-[27px]"}><Chev d="M3 7l9 10 9-10" /></button>
      </div>
    </div>
    <div className="h-[4px] shrink-0 bg-[#1b2035]" />
    <SectionHead>详细视图</SectionHead>
    <div className="h-[38px] shrink-0 border-b-2 border-[#9b9b9b] bg-[#cbcbcb]" />
    <div className="h-10 shrink-0 bg-[#e9e9e9]" />
    <div className="h-[180px] shrink-0 overflow-hidden bg-[#f0f0f0]">
      <table className="w-full table-fixed border-separate border-spacing-0 text-left">
        <colgroup><col className="w-[28px]" /><col className="w-[240px]" /><col className="w-[120px]" /><col className="w-[120px]" /><col /></colgroup>
        <thead>
          <tr className="h-[30px] bg-linear-to-b from-[#f2f5f8] via-[#d3d9e0] to-[#e6eaee]">
            {["", "名称", "数据类型", "详细信息", "..."].map((h, i) => (
              <th key={i} className="border-r-2 border-b border-r-[#b9bdc2] border-b-[#b5b5b5] p-0 pl-1.5 leading-[26px] font-normal">{h}</th>
            ))}
          </tr>
        </thead>
        <tbody>
          {[["X", "%Q1000..."], ["Y", "%Q2000.0"], ["Z", "%Q3000.0"], null, null].map((r, i) => (
            <tr key={i} className={"odd:h-[29px] even:h-[28px] *:border-b-2 *:border-[#fafafa] *:p-0 *:leading-[26px] " + (i === 0 ? "bg-[#d3d9de]" : "")}>
              <td className="pl-px!">{r && <TagIcon />}</td>
              <td><span className="pl-[35px]">{r && "DDJ_MOVE_" + r[0]}</span></td>
              <td>
                <div className="flex items-center justify-between pl-1.5">
                  {r && "LReal"}
                  {i === 0 && <button type="button" aria-label="选择数据类型" className="flex h-[26px] w-6 items-center justify-center border-2 border-[#8c8c8c] bg-[#e4e4e4]">{icons.list}</button>}
                </div>
              </td>
              <td>
                <div className="flex items-center justify-between pl-1.5">
                  {r && r[1]}
                  {i === 0 && <button type="button" aria-label="选择地址" className="flex h-[26px] w-[26px] items-center justify-center border-2 border-[#a0a0a0] bg-[#dcdcdc]"><Arrow gray /></button>}
                </div>
              </td>
              <td />
            </tr>
          ))}
        </tbody>
      </table>
    </div>
    <div className="flex h-[27px] shrink-0 items-stretch bg-[#c3c3c3] px-px">
      <button type="button" aria-label="向左滚动" className={sbBtn + "w-[26px]"}><Chev d="M17 3L7 12l10 9" /></button>
      <div className="mx-[3px] flex flex-1 items-center justify-center gap-[2px] border-2 border-[#a0a0a0] bg-linear-to-b from-[#e6e6e6] to-[#d2d2d2]">
        {[0, 1, 2, 3].map((k) => <span key={k} className="h-3 w-px bg-[#777]" />)}
      </div>
      <span className="w-5" />
      <button type="button" aria-label="向右滚动" className={sbBtn + "w-[26px]"}><Chev d="M7 3l10 9-10 9" /></button>
    </div>
  </aside>
);

/* ---------- tag table ---------- */
const tags = [["X", "%Q1000.0"], ["Y", "%Q2000.0"], ["Z", "%Q3000.0"]];
const headRow = "h-[29px] bg-linear-to-b from-[#f0f0f0] via-[#cdcdcd] to-[#e2e2e2]";
const headCell = "border-r-2 border-b-2 border-r-[#b2b2b2] border-b-[#b5b5b5] p-0 pl-1.5 leading-[27px] font-normal ";
const TagTable = () => (
  <div className="relative min-h-0 flex-1 overflow-hidden bg-[#f0f0f0]">
    <table className="w-full table-fixed border-separate border-spacing-0 text-left">
      <colgroup>
        <col className="w-[57px]" /><col className="w-[28px]" /><col className="w-[301px]" /><col className="w-[150px]" /><col className="w-[149px]" />
        <col className="w-[75px]" /><col className="w-[75px]" /><col className="w-[75px]" /><col className="w-[75px]" /><col className="w-[94px]" /><col className="w-[361px]" /><col />
      </colgroup>
      <thead>
        <tr className={headRow}>
          {["", "", "名称", "数据类型", "地址", "保持", "从 H...", "从 H...", "在 H...", "监控", "注释", ""].map((h, i) => (
            <th key={i} className={headCell + (i === 4 ? "bg-linear-to-b from-[#f4f7fa] via-[#d8dee6] to-[#eaeef2]" : "")}>{h}</th>
          ))}
        </tr>
      </thead>
      <tbody>
        {Array.from({ length: 28 }, (_, i) => {
          const t = tags[i];
          const add = i === 3;
          const g = "bg-[#e0e0e0] ";
          return (
            <tr key={i} className="odd:h-[29px] even:h-[28px] *:border-r-2 *:border-b-2 *:border-[#fafafa] *:p-0 *:leading-[26px]">
              <td className={i === 2 ? "bg-[#c0ccd9]" : "bg-[#cbcbcb]"}><span className="pl-1.5 text-[#808080]">{i < 4 ? i + 1 : ""}</span></td>
              <td>{t && <TagIcon />}</td>
              <td className="border-r-[#d8d8d8]!"><span className={"pl-[35px] " + (add ? "text-[#8a8a8a]" : "")}>{t ? "DDJ_MOVE_" + t[0] : add ? "<新增>" : ""}</span></td>
              <td>
                <div className="flex items-center justify-between pl-1.5">
                  {t && "LReal"}
                  {i === 2 && <button type="button" aria-label="选择数据类型" className="flex h-[26px] w-6 items-center justify-center border-2 border-[#8c8c8c] bg-[#e4e4e4]">{icons.list}</button>}
                </div>
              </td>
              <td>
                {i === 2 ? (
                  <div className="flex h-[27px] border-2 border-[#3a6fd0] bg-white">
                    <input aria-label="地址" defaultValue="%Q3000.0" className="min-w-0 flex-1 pl-1 outline-none" />
                    <button type="button" aria-label="打开地址列表" className="flex w-[26px] items-center justify-center border-l-2 border-[#777] bg-linear-to-b from-[#e6e6e6] to-[#c4c4c4]"><Arrow /></button>
                  </div>
                ) : <span className="pl-1.5">{t && t[1]}</span>}
              </td>
              <td className={i < 4 ? g : ""}><div className="flex items-center pl-[13px]">{i < 4 && <Check disabled label="保持" />}</div></td>
              {[1, 2, 3].map((k) => (
                <td key={k} className={add ? g : ""}><div className="flex items-center pl-[26px]">{i < 4 && <Check checked disabled={add} tone={add ? "#666" : undefined} label="HMI" />}</div></td>
              ))}
              <td className={t ? g : ""} />
              <td /><td />
            </tr>
          );
        })}
      </tbody>
    </table>
    <div className="pointer-events-none absolute top-[29px] left-[20px] h-[88px] w-[1133px] border-2 border-[#ed1c24]" />
  </div>
);

const crumbs = ["个人项目-齿轮生产线", "PLC_1 [CPU 1512C-1 PN]", "PLC 变量", "变量表_1 [3]"];
const msgCols = ["!", "路径", "描述", "转至", "?", "错误", "警告", "时间", ""];
const Center = () => (
  <main className="flex min-w-0 flex-1 flex-col border-x-4 border-[#1b2035]">
    <div className="flex h-[37px] shrink-0 items-center bg-[#2d344d] pr-1 pl-[7px] text-white">
      <nav aria-label="路径" className="flex flex-1 items-center text-[20px] font-medium">
        {crumbs.map((c, i) => (
          <React.Fragment key={c}>
            {i > 0 && <Ic c="w-3 h-3 mx-[13px]"><path d="M6 0v24l12-12z" fill="#fff" /></Ic>}
            <span className="leading-7"><Mix>{c}</Mix></span>
          </React.Fragment>
        ))}
      </nav>
      <WinBtn g="min" label="最小化" /><WinBtn g="restore" label="浮动" /><WinBtn g="max" label="最大化" /><WinBtn g="close" label="关闭" />
    </div>
    <div className="h-1 shrink-0 bg-[#ececec]" />
    <div className="flex h-[38px] shrink-0 items-end justify-end gap-[2px] border-b-2 border-[#8c8c8c] bg-[#cbcbcb] pr-[7px]">
      <button type="button" className={tabBase + tabOn + "w-[109px] gap-1 pl-[3px]"}><TagIcon />变量</button>
      <button type="button" className={tabBase + tabOff + "w-[158px] gap-1.5 pl-[6px]"}>{icons.konst}用户常量</button>
    </div>
    <div className="flex h-10 shrink-0 items-center bg-[#e9e9e9] pr-[17px] pl-[5px]">
      <T i="eIns" label="插入行" /><T i="eAdd" label="添加行" /><Sep />
      <T i="eExp" label="导出" /><T i="eImp" label="导入" /><Sep />
      <T i="eMon" label="全部监视" /><T i="eBat" label="保持" />
      <span className="flex-1" />
      <T i="eUser" label="视图" />
    </div>
    <h1 className="h-8 shrink-0 bg-[#d9d9d9] pl-[36px] text-[22px] leading-8 font-semibold">变量表_1</h1>
    <TagTable />
    <div className="h-1 shrink-0 bg-[#1b2035]" />
    <section className="flex h-[399px] shrink-0 flex-col bg-[#f0f0f0]">
      <div className="flex h-9 shrink-0 items-end justify-end bg-[#b0b0b0]">
        <button type="button" className={tabBase + tabOff + "h-[30px]! w-[113px] gap-1 pl-[3px]"}>{icons.props}属性</button>
        <button type="button" className={tabBase + "h-[30px]! w-[124px] gap-1 bg-[#ececec] pl-[3px] font-bold"}>{icons.infoTab}信息<span className="ml-auto pr-1.5">{icons.badge}</span></button>
        <button type="button" className={tabBase + tabOff + "mr-[26px] h-[30px]! w-[113px] gap-1 pl-[3px]"}>{icons.diag}诊断</button>
        <div className="flex self-center pr-[5px]"><WinBtn g="restore" label="浮动" /><WinBtn g="rows" label="布局" /><WinBtn g="down" label="收起" /></div>
      </div>
      <div className="h-1 shrink-0 bg-[#ececec]" />
      <div className="flex h-[38px] shrink-0 items-end gap-[2px] border-b-2 border-[#8c8c8c] bg-[#cbcbcb] pl-[9px]">
        <button type="button" className={tabBase + tabOff + "h-[31px]! w-[106px] justify-between pr-1 pl-[15px]"}>常规{icons.badge}</button>
        <button type="button" className={tabBase + tabOff + "h-[31px]! w-[142px] pl-[15px]"}>交叉引用</button>
        <button type="button" className={tabBase + tabOn + "h-[33px]! w-[94px] pl-[15px]"}>编译</button>
      </div>
      <div className="flex h-[41px] shrink-0 items-center gap-[3px] bg-[#e9e9e9] pl-[5px]">
        {[["err", "错误"], ["warn", "警告"], ["inf", "信息"]].map(([k, l]) => (
          <button key={k} type="button" aria-label={l} className="flex h-[33px] w-[33px] items-center justify-center rounded-[2px] border-2 border-[#4a7be0] bg-white">{icons[k]}</button>
        ))}
        <Combo label="消息过滤" options={["显示所有消息"]} className="ml-[4px] h-[28px] w-[300px]" />
      </div>
      <div className="h-[30px] shrink-0" />
      <div className="min-h-0 flex-1 overflow-hidden">
        <table className="w-full table-fixed border-separate border-spacing-0 text-left">
          <colgroup>
            <col className="w-[42px]" /><col className="w-[298px]" /><col className="w-[526px]" /><col className="w-[76px]" /><col className="w-[75px]" /><col className="w-[81px]" /><col className="w-[105px]" /><col className="w-[121px]" /><col />
          </colgroup>
          <thead>
            <tr className={headRow}>{msgCols.map((h, i) => <th key={i} className={headCell + (h === "!" ? "pl-[9px]! text-[#3a5f8f]" : h === "?" ? "text-[#3a5f8f]" : "")}>{h}</th>)}</tr>
          </thead>
          <tbody>
            {Array.from({ length: 8 }, (_, i) => (
              <tr key={i} className="odd:h-[29px] even:h-[28px]"><td colSpan={9} className="border-b-2 border-[#fafafa] p-0" /></tr>
            ))}
          </tbody>
        </table>
      </div>
    </section>
  </main>
);

/* ---------- task card ---------- */
const zh = ["中文（中华人民共和国）"];
const RightPanel = () => (
  <aside className="flex w-[345px] shrink-0 flex-col border-r-2 border-[#2b3044] bg-[#e9e9e9]">
    <div className="flex h-[37px] shrink-0 items-center bg-[#b0b0b0] pr-[4px] pl-[9px] text-white">
      <h2 className="flex-1 text-[22px] leading-7 font-medium">任务</h2>
      <WinBtn g="restore" label="浮动" /><WinBtn g="pin" label="自动折叠" /><WinBtn g="right" label="折叠" />
    </div>
    <div className="h-[9px] shrink-0 bg-[#ececec]" />
    <h2 className="h-[33px] shrink-0 border-b-2 border-[#8c8c8c] bg-linear-to-b from-[#fafafa] to-[#dcdcdc] pl-[9px] text-[22px] leading-[28px] font-bold">选项</h2>
    <div className="flex h-[41px] shrink-0 items-center justify-end pr-[1px]"><T i="win" label="窗口" /></div>
    <div className="h-[4px] shrink-0 bg-[#9a9a9a]" />
    <SectionHead>查找和替换</SectionHead>
    <div className="px-[18px]">
      <label htmlFor="find" className="mt-[24px] block pl-1 leading-7">查找：</label>
      <Combo id="find" options={[""]} className="mt-px h-[27px]" />
      <div className="mt-[9px] pl-px">
        <CheckRow id="c1" text="全字匹配" disabled /><CheckRow id="c2" text="区分大小写" /><CheckRow id="c3" text="在子结构中查找" disabled />
        <CheckRow id="c4" text="在隐藏文本中查找" disabled /><CheckRow id="c5" text="使用通配符" disabled /><CheckRow id="c6" text="使用正则表达式" disabled />
      </div>
      <div className="mt-[11px] pl-px"><RadioRow id="r1" name="dir" text="向下" checked /><RadioRow id="r2" name="dir" text="向上" /></div>
      <GrayBtn className="mt-[4px] block w-[280px]">查找</GrayBtn>
      <label htmlFor="repl" className="mt-[25px] block pl-1 leading-7">替换为：</label>
      <Combo id="repl" options={[""]} className="mt-[3px] h-[27px]" />
      <div className="mt-[7px] pl-px">
        <RadioRow id="r3" name="scope" text="整个文档" checked disabled /><RadioRow id="r4" name="scope" text="从当前位置开始" disabled /><RadioRow id="r5" name="scope" text="选择" disabled />
      </div>
      <div className="mt-[5px] mb-[18px] flex gap-[9px]"><GrayBtn className="w-[136px]">替换</GrayBtn><GrayBtn className="w-[135px]">全部替换</GrayBtn></div>
    </div>
    <div className="h-[4px] shrink-0 bg-[#9a9a9a]" />
    <SectionHead>语言和资源</SectionHead>
    <div className="border-b-2 border-[#a6a6a6] px-[18px] pb-[15px]">
      <label htmlFor="lang1" className="mt-[19px] mb-[7px] block pl-1 leading-7">编辑语言：</label>
      <div className="flex gap-[10px]">
        <Combo id="lang1" options={zh} className="h-[29px] flex-1" />
        <button type="button" aria-label="添加语言" className="flex h-[30px] w-[30px] items-center justify-center rounded-[2px] border-2 border-[#a6a6a6] bg-[#ececec]">{icons.addNew}</button>
      </div>
    </div>
    <div className="flex min-h-0 flex-1 flex-col px-[18px] pb-[18px]">
      <label htmlFor="lang2" className="mt-[19px] mb-[7px] block pl-1 leading-7">参考语言：</label>
      <Combo id="lang2" options={zh} className="h-[29px] shrink-0" />
      <div className="mt-[10px] flex-1 border-2 border-[#a6a6a6]" />
    </div>
  </aside>
);
const vText = "[writing-mode:vertical-rl] [text-orientation:sideways] text-[22px] leading-6 ";
const sideTab = "flex w-[30px] flex-col items-center border-2 border-l-0 border-[#8c8c8c] ";

export default function App() {
  return (
    <div className="relative flex h-screen w-full flex-col overflow-hidden bg-[#cbcbcb] font-['Noto_Sans','Noto_Sans_CJK_SC',sans-serif] text-[18px] leading-6 text-black">
      <Defs />
      <header className="shrink-0">
        <div className="flex h-[34px] items-center border-b border-black bg-linear-to-b from-[#8c8c8c] via-[#1c1c1c] via-30% to-[#1c1c1c] pr-[2px] pl-[8px] text-white">
          <div role="img" aria-label="TIA V16" className="mr-[8px] flex h-[28px] w-[26px] flex-col items-center justify-center bg-[#3b4560] text-[11px] leading-[12px] font-bold">
            <span>TIA</span><span className="text-[#a9b8e6]">V16</span>
          </div>
          <div className="flex-1 text-[19px] leading-7 font-medium whitespace-pre"><Mix>{"Siemens   -   C:\\Users\\Administrator\\Desktop\\TIA\\2025个人项目\\个人项目-齿轮生产线\\个人项目-齿轮生产线"}</Mix></div>
          <WinBtn g="minThin" label="最小化" c="w-4 h-4" /><WinBtn g="restore" label="还原" c="w-4 h-4" /><WinBtn g="close" label="关闭" />
        </div>
        <div className="flex border-b-2 border-[#4a4f60] bg-[#cbcbcb]">
          <div className="min-w-0 flex-1">
            <nav aria-label="菜单" className="flex h-[41px] items-center gap-[25px] pl-[17px]">
              {["项目(P)", "编辑(E)", "视图(V)", "插入(I)", "在线(O)", "选项(N)", "工具(T)", "窗口(W)", "帮助(H)"].map((m) => <button key={m} type="button">{m}</button>)}
            </nav>
            <div className="flex h-[33px] items-center pl-[14px]">
              <T i="tNew" label="新建" /><T i="tOpen" label="打开" />
              <button type="button" className="mr-3 ml-px flex items-center gap-2.5 text-[19px]">{icons.tSave}保存项目</button>
              <Sep /><T i="tPrint" label="打印" />
              <Sep /><T i="tCut" label="剪切" /><T i="tCopy" label="复制" /><T i="tPaste" label="粘贴" /><T i="tDel" label="删除" />
              <Sep /><T i="tUndo" label="撤销" />
              <button type="button" aria-label="撤销列表" className="mr-1"><Ic c="w-3 h-5"><path d="M9 0h6v6h7L12 15 2 6h7zM2 19h20v4H2z" fill="#000" /></Ic></button>
              <T i="tRedo" label="重做" />
              <button type="button" aria-label="重做列表" className="mr-1"><Ic c="w-3 h-5"><path d="M9 0h6v6h7L12 15 2 6h7zM2 19h20v4H2z" fill="#8a8a8a" /></Ic></button>
              <Sep /><T i="tCompile" label="编译" /><T i="tDown" label="下载" /><T i="tUp" label="上传" /><T i="tPc" label="仿真" /><T i="tRt" label="运行系统" />
              <Sep />
              <button type="button" className="mr-3 ml-1 flex items-center gap-[10px] text-[19px]">{icons.tOn}转至在线</button>
              <button type="button" disabled className="mr-3 flex items-center gap-[11px] text-[19px] text-[#8a8a8a]">{icons.tOff}转至离线</button>
              <Sep /><T i="tAccess" label="可访问的设备" /><T i="tStart" label="启动 CPU" /><T i="tStop" label="停止 CPU" />
              <Sep /><T i="tXref" label="交叉引用" />
              <Sep /><T i="tSplitH" label="水平拆分" /><T i="tSplitV" label="垂直拆分" />
              <Sep /><input aria-label="搜索" placeholder="<在项目中搜索>" className="mr-[7px] ml-[6px] h-[27px] w-[180px] border-2 border-[#9b9b9b] bg-white pl-1 text-[18px] outline-none placeholder:text-[#8a8a8a]" />
              <T i="tFind" label="查找" />
            </div>
          </div>
          <div className="flex flex-col items-end pt-[20px] pr-[35px] whitespace-nowrap">
            <div className="mr-[35px] text-[21px] leading-[24px] font-medium">Totally Integrated Automation</div>
            <div className="text-[24px] leading-[22px] font-bold text-[#6a6a6a]">PORTAL</div>
          </div>
        </div>
      </header>

      <div className="flex min-h-0 flex-1">
        <div className="flex w-[36px] shrink-0 flex-col border-r-2 border-[#2b3044] bg-[#b0b0b0]">
          <div className="h-[38px] border-b-2 border-[#e6e6e6]" />
          <div className="flex h-[332px] items-center justify-center border-b-2 border-[#e6e6e6] pr-[3px]">
            <button type="button" className={vText + "rotate-180 font-semibold text-white"}>PLC 编程</button>
          </div>
        </div>
        <LeftPanel />
        <Center />
        <RightPanel />
        <div className="flex w-[34px] shrink-0 flex-col gap-[4px] bg-[#b0b0b0] pt-[46px]">
          <button type="button" className={sideTab + "h-[110px] gap-1 bg-[#ececec] pt-1 font-bold"}>{icons.task}<span className={vText}>任务</span></button>
          <button type="button" className={sideTab + "h-[86px] gap-1 bg-[#dadada] pt-1 text-[#5a5a5a]"}>{icons.book}<span className={vText}>库</span></button>
          <button type="button" className={sideTab + "h-[91px] bg-[#dadada] pt-[18px] text-[#5a5a5a]"}><span className={vText}>插件</span></button>
        </div>
      </div>

      <footer className="flex h-[41px] shrink-0 items-center bg-[#1c1c1c] pt-px text-white">
        <button type="button" className="flex w-[271px] items-center gap-[12px] pl-[48px] text-[20px] font-semibold"><Ic c="w-5 h-5">{glyph.left}</Ic><span className="whitespace-pre"><Mix>{"Portal 视图"}</Mix></span></button>
        <button type="button" className="mr-1 flex h-[30px] w-[170px] items-center gap-2 bg-[#c3c3c3] pl-[5px] text-[19px] text-black">{icons.overview}总览</button>
        <button type="button" className="flex h-[30px] w-[170px] items-center gap-2 bg-white pl-[5px] text-[19px] font-bold text-black">{icons.table}变量表_1</button>
        <span className="flex-1" />
        <button type="button" aria-label="状态" className="mr-2 flex h-[30px] w-[30px] items-center justify-center bg-[#b8b8b8]">{icons.status}</button>
        <div className="flex h-full w-[494px] items-center gap-2 border-l border-[#555] pl-1 text-[20px]">{icons.ok}项目 个人项目-齿轮生产线 已打开。</div>
      </footer>
      <div className="pointer-events-none absolute right-[3px] bottom-[12px] text-[51px] leading-[60px] font-light text-white/70 [text-shadow:1px_1px_1px_rgba(90,90,90,0.8)]">CSDN @派葛穆</div>
    </div>
  );
}
